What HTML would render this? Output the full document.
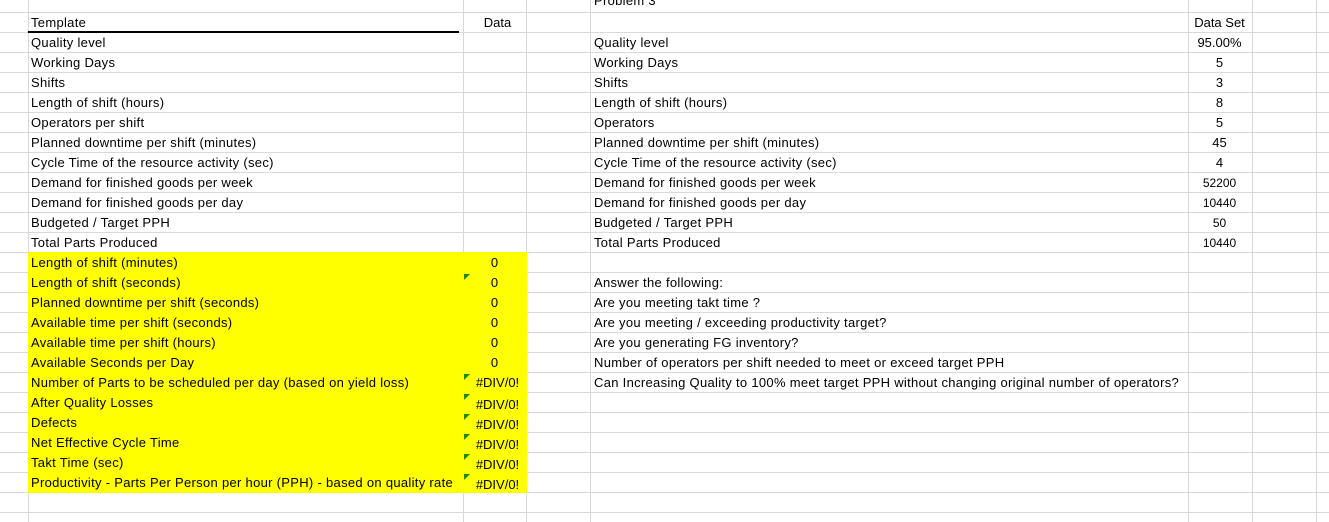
<!DOCTYPE html><html><head><style>
body{margin:0;width:1329px;height:522px;background:#fff;position:relative;overflow:hidden;font-family:"Liberation Sans",sans-serif;font-size:13px;letter-spacing:0.3px;color:#000}
.h{position:absolute;left:0;width:1329px;height:1px;background:#d9d9d9}
.v{position:absolute;top:0;height:522px;width:1px;background:#d9d9d9}
.t{position:absolute;line-height:20px;white-space:nowrap}
.c{position:absolute;line-height:20px;text-align:center;width:63px;letter-spacing:0}
.g{position:absolute;width:0;height:0;border-top:6px solid #1a8a1a;border-right:6px solid transparent}
</style></head><body>
<div class="v" style="left:28px"></div><div class="v" style="left:463px"></div><div class="v" style="left:526px"></div><div class="v" style="left:590px"></div><div class="v" style="left:1188px"></div><div class="v" style="left:1252px"></div><div class="v" style="left:1316px"></div>
<div id="rows"></div>
<script>
(function(){
var r=document.getElementById('rows'),h='';
for(var y=12;y<522;y+=20)h+='<div class="h" style="top:'+y+'px"></div>';
h+='<div style="position:absolute;left:28px;top:252px;width:499px;height:241px;background:#ffff00"></div>';
h+='<div style="position:absolute;left:28px;top:31px;width:431px;height:2px;background:#000"></div>';
h+='<div class="t" style="left:594px;top:-9px">Problem 3</div>';
var L=["Template","Quality level","Working Days","Shifts","Length of shift (hours)","Operators per shift","Planned downtime per shift (minutes)","Cycle Time of the resource activity (sec)","Demand for finished goods per week","Demand for finished goods per day","Budgeted / Target PPH","Total Parts Produced","Length of shift (minutes)","Length of shift (seconds)","Planned downtime per shift (seconds)","Available time per shift (seconds)","Available time per  shift (hours)","Available Seconds per Day","Number of Parts to be scheduled per day (based on yield loss)","After Quality Losses","Defects","Net Effective Cycle Time","Takt Time (sec)","Productivity - Parts Per Person per hour (PPH) - based on quality rate"];
var D=["Data","","","","","","","","","","","","0","0","0","0","0","0","#DIV/0!","#DIV/0!","#DIV/0!","#DIV/0!","#DIV/0!","#DIV/0!"];
var R=["","Quality level","Working Days","Shifts","Length of shift (hours)","Operators","Planned downtime per shift (minutes)","Cycle Time of the resource activity (sec)","Demand for finished goods per week","Demand for finished goods per day","Budgeted / Target PPH","Total Parts Produced","","Answer the following:","Are you meeting takt time ?","Are you meeting / exceeding productivity target?","Are you generating FG inventory?","Number of operators per shift needed to meet or exceed target PPH","Can Increasing Quality to 100% meet target PPH without changing original number of operators?"];
var RD=["Data Set","95.00%","5","3","8","5","45","4","52200","10440","50","10440"];
for(var i=0;i<L.length;i++){var tp=13+i*20;
h+='<div class="t" style="left:31px;top:'+tp+'px">'+L[i]+'</div>';
if(D[i]){var dy=(i>=19)?2:0;h+='<div class="c" style="left:'+(D[i].length>2?466:463)+'px;top:'+(tp+dy)+'px">'+D[i]+'</div>';}
if(i==13||i>=18)h+='<div class="g" style="left:464px;top:'+(tp+1)+'px"></div>';
if(R[i])h+='<div class="t" style="left:594px;top:'+tp+'px">'+R[i]+'</div>';
if(RD[i])h+='<div class="c" style="left:1188px;top:'+tp+'px;'+(i>=8?'font-size:12px':'')+'">'+RD[i]+'</div>';}
r.innerHTML=h;
})();
</script>
</body></html>
